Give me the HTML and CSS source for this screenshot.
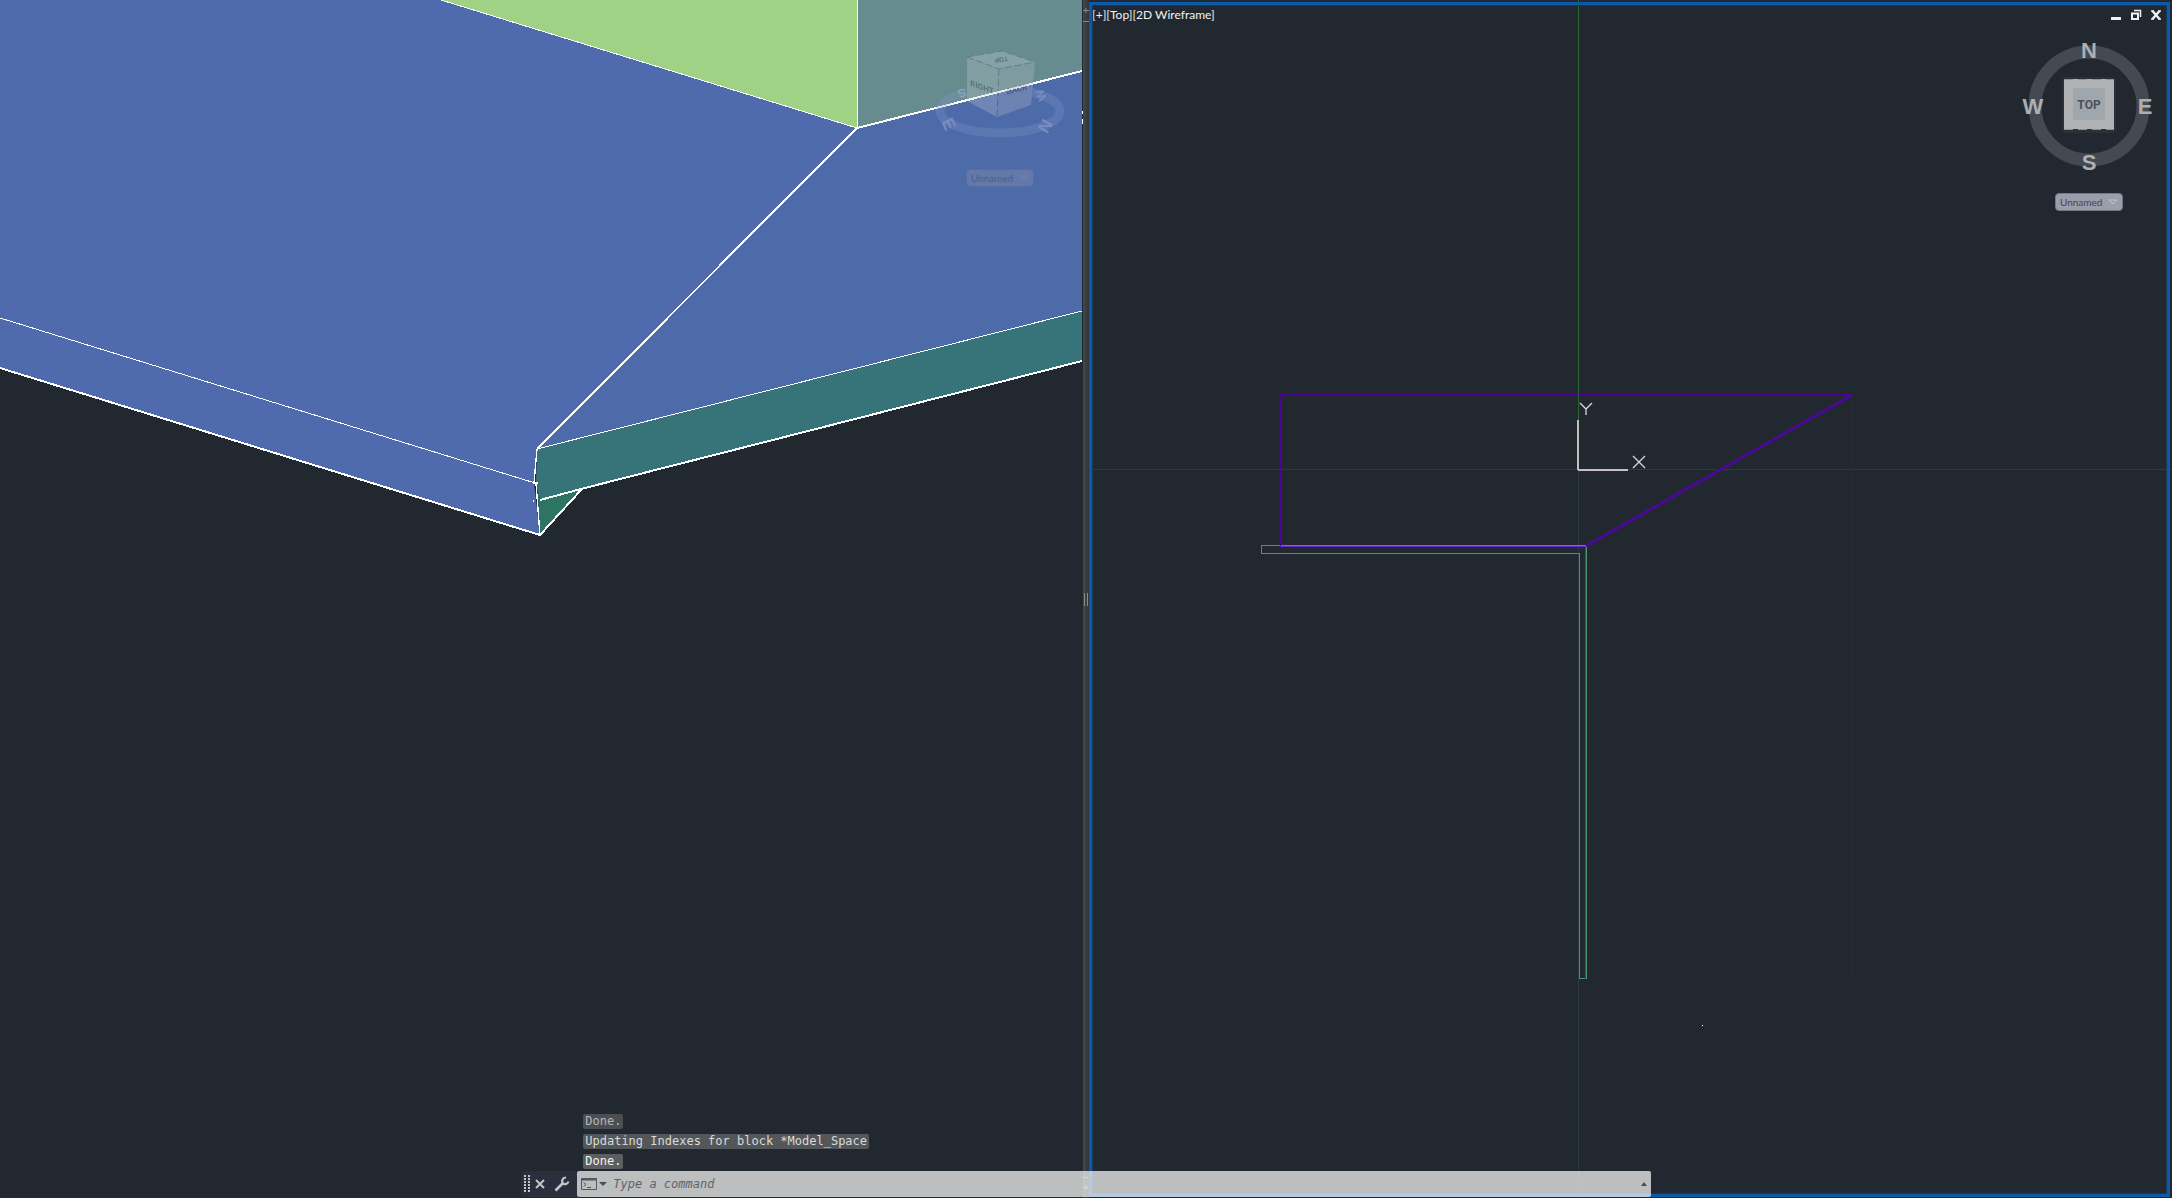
FILE: index.html
```
<!DOCTYPE html>
<html lang="en">
<head>
    <meta charset="UTF-8">
    <meta name="viewport" content="width=device-width, initial-scale=1.0">
    <title>Model Space</title>
    <link rel="stylesheet" href="styles.css">
</head>
<body>
    <main class="workspace">
        <section class="viewport" aria-label="3D view">
            <svg class="scene" viewBox="0 0 1083 1198" preserveAspectRatio="xMidYMid slice">
                <!-- faces -->
                <polygon fill="#506bad" points="0,0 441,0 857,128 537,449 534,483 540,535 0,368"/>
                <polygon fill="#4d6aa9" points="857,128 1082,71 1082,311 537,449"/>
                <polygon fill="#9fd285" points="441,0 857,0 857,128"/>
                <polygon fill="#668c90" points="857,0 1082,0 1082,71 857,128"/>
                <polygon fill="#37747a" points="537,449 1082,311 1082,361 581,489 540,500 536,483"/>
                <polygon fill="#2e7464" points="537,483 540,500 581,490 540,535"/>
                <!-- edges -->
                <g fill="none" stroke="#fff" shape-rendering="crispEdges">
                    <path d="M441 0 857 128V0M0 318 535 483M537 449 1082 311"/>
                    <path d="M537 449 534 483H538M536 483 540 535" stroke-width="1.4"/>
                    <path d="M1082 71 857 128 537 449M0 368 540 535 581 490M540 500 581 489 1082 361" stroke-width="2"/>
                    <path d="M533 500V502M1082 111V114M1082 119V124"/>
                </g>
            </svg>

            <div class="navigator navigator-faded">
                <svg class="cube-3d" viewBox="930 45 140 100">
                    <ellipse class="ring-3d" cx="1000" cy="111" rx="60" ry="22"/>
                    <g class="compass-3d">
                        <text class="far" x="962" y="97" transform="rotate(165 962 93)">S</text>
                        <text class="far" x="1041" y="99" transform="rotate(-115 1041 95)">W</text>
                        <text x="949" y="130" transform="rotate(65 949 124)">E</text>
                        <text x="1045" y="132" transform="rotate(-60 1045 126)">N</text>
                    </g>
                    <polygon fill="#d0d8dc" points="967,57 1002,51 1035,62 999,69"/>
                    <polygon fill="#c2c9d0" points="967,57 999,69 997,117 967,101"/>
                    <polygon fill="#b6bec8" points="999,69 1035,62 1031,105 997,117"/>
                    <path class="cube-edges" d="M967 57 999 69 1035 62M999 69 997 117M967 57 1002 51 1035 62"/>
                    <g class="face-text">
                        <text transform="translate(982 90) skewY(20)">RIGHT</text>
                        <text transform="translate(1017 92) skewY(-14)">BACK</text>
                        <text class="face-top" transform="translate(1001 57) rotate(172)">TOP</text>
                    </g>
                </svg>
                <button class="ucs" type="button">Unnamed
                    <svg viewBox="0 0 10 6"><path d="M1 1H9L5 5Z"/></svg>
                </button>
            </div>
        </section>

        <div class="divider">
            <svg viewBox="0 0 6 24"><path d="M3 8V13M0 10.5H6M0 21.5H6"/></svg>
            <span class="grip"></span>
            <svg viewBox="0 0 6 24"><path d="M3 11V16M0 13.5H6M0 3.5H6"/></svg>
        </div>

        <section class="viewport viewport-active" aria-label="Top view">
            <svg class="scene" viewBox="1089 0 1083 1198" preserveAspectRatio="xMidYMid slice">
                <g fill="none" shape-rendering="crispEdges">
                    <!-- grid axes -->
                    <path stroke="#2e3648" d="M1089 469.5H1578M1578.5 470V1198"/>
                    <path stroke="#5c262b" d="M1578 469.5H2172"/>
                    <path stroke="#2a6c30" d="M1578.5 0V470"/>
                    <!-- fascia -->
                    <path stroke="#4b926f" d="M1586.5 545.5H1261.5V553.5H1579.5V978.5H1586.5V545"/>
                    <!-- roof outline -->
                    <path stroke="#4a0496" d="M1280.5 546V394.5H1851.5V979.5H1586"/>
                    <path stroke="#6a24cc" d="M1280 546.5H1586M1585.5 546V979"/>
                </g>
                <path fill="none" stroke="#4a0896" stroke-width="3" d="M1586 546 1852 395"/>
                <!-- UCS icon -->
                <g fill="none" stroke="#d8dcd8">
                    <path stroke-width="2" stroke="#b9c3b9" d="M1578 420V470"/>
                    <path stroke-width="2" stroke="#c9bfc1" d="M1578 470H1628"/>
                    <path stroke-width="1.3" d="M1580 403 1586 409 1592 403M1586 409V415M1633 456 1645 468M1645 456 1633 468"/>
                </g>
                <path fill="#fff" d="M1702 1025h1v1h-1z"/>
            </svg>

            <header class="viewport-bar">
                <div class="viewport-menu">
                    <button type="button">[+]</button><button type="button">[Top]</button><button type="button">[2D Wireframe]</button>
                </div>
                <div class="window-buttons">
                    <button type="button" aria-label="Minimize"><svg viewBox="0 0 12 12"><path d="M1 9.500H11" stroke-width="3"/></svg></button>
                    <button type="button" aria-label="Restore"><svg viewBox="0 0 12 12"><path d="M2 4.500H8V10H2Z" stroke-width="2"/><path d="M4 1.500H10.500V8" stroke-width="1.500"/></svg></button>
                    <button type="button" aria-label="Close"><svg viewBox="0 0 12 12"><path d="M2.500 2 9.500 10M9.500 2 2.500 10" stroke-width="2.400"/><path d="M1 2H4M8 2H11M1 10H4M8 10H11" stroke-width="1.500"/></svg></button>
                </div>
            </header>

            <div class="navigator navigator-top">
                <svg class="cube-top" viewBox="0 0 140 140">
                    <circle cx="70" cy="72" r="54" fill="none" stroke="#444a51" stroke-width="13"/>
                    <g class="compass">
                        <text x="70" y="24">N</text>
                        <text x="126" y="80">E</text>
                        <text x="70" y="136">S</text>
                        <text x="14" y="80">W</text>
                    </g>
                    <rect x="43" y="43" width="54" height="56" rx="4" fill="#2b3037"/>
                    <rect x="45" y="45" width="50" height="50" fill="#afb1b3"/>
                    <rect x="54" y="54" width="32" height="32" fill="#9fa6ac"/>
                    <path d="M45 45.500H95M45 95.500H95" stroke="#8d9194" stroke-dasharray="9 5"/>
                    <text class="cube-label" x="70" y="75">TOP</text>
                </svg>
                <button class="ucs" type="button">Unnamed
                    <svg viewBox="0 0 10 6"><path d="M1 1H9L5 5Z"/></svg>
                </button>
            </div>
        </section>
    </main>

    <div class="command-window">
        <ul class="history">
            <li class="oldest">Done.</li>
            <li class="older">Updating Indexes for block *Model_Space</li>
            <li>Done.</li>
        </ul>
        <form class="command-line">
            <div class="command-tools">
                <svg class="handle" viewBox="0 0 6 18"><path d="M1 0V18M5 0V18" stroke-width="2" stroke-dasharray="2 1"/></svg>
                <button type="button" aria-label="Close"><svg viewBox="0 0 12 12"><path d="M2 2 10 10M10 2 2 10" stroke-width="2"/></svg></button>
                <button type="button" aria-label="Customize"><svg class="wrench" viewBox="0 0 16 16"><path d="M1.500 14.500 9 7" stroke-width="2.600"/><path d="M12 1.500C9 1.500 7.500 4 8.500 7 10 9 13.500 8.500 14.500 5.500" stroke-width="2.200"/></svg></button>
            </div>
            <div class="command-box">
                <button type="button" aria-label="Recent commands">
                    <svg class="prompt" viewBox="0 0 26 12"><path d="M.5 .5H15.500V11.500H.5Z"/><path d="M0 1.500H16" stroke-width="2"/><path d="M2.500 4.500 5 6.500 2.500 8.500M6 9.500H10"/><path class="solid" d="M18 4H26L22 8Z"/></svg>
                </button>
                <input type="text" aria-label="Command" placeholder="Type a command">
                <button type="button" aria-label="Expand history"><svg class="expand" viewBox="0 0 6 4"><path class="solid" d="M0 4 3 0 6 4Z"/></svg></button>
            </div>
        </form>
    </div>
</body>
</html>
```
FILE: styles.css
```
* {
    box-sizing: border-box;
}
body {
    margin: 0;
    height: 100vh;
    overflow: hidden;
    position: relative;
    background: #222830;
    color: #f0f2f4;
    font-family: Lato, "Noto Sans", sans-serif;
    font-size: 12px;
}
button {
    padding: 0;
    border: 0;
    background: none;
    color: inherit;
    font: inherit;
    cursor: pointer;
}
svg {
    display: block;
}

/* viewports */
.workspace {
    display: grid;
    grid-template-columns: 1fr 6px 1fr;
    height: 100%;
}
.viewport {
    position: relative;
    min-width: 0;
    overflow: hidden;
}
.viewport-active::after {
    content: "";
    position: absolute;
    inset: 2px 2px 1px 0;
    border: 3px solid #0d59a9;
    box-shadow: inset 0 0 1px 1px #173a60;
    pointer-events: none;
}
.scene {
    position: absolute;
    width: 100%;
    height: 100%;
}
.divider {
    display: flex;
    flex-direction: column;
    justify-content: space-between;
    align-items: center;
    background: linear-gradient(to right, #444848, #303438);
}
.divider svg {
    width: 6px;
    height: 24px;
    fill: none;
    stroke: #85898a;
}
.grip {
    width: 4px;
    height: 13px;
    border: solid #8a8a8a;
    border-width: 0 1px;
}
.viewport-bar {
    position: relative;
    display: flex;
    justify-content: space-between;
    padding: 7px 10px 0 3px;
    line-height: 16px;
}
.viewport-menu {
    display: flex;
}
.window-buttons {
    display: flex;
    align-items: center;
    gap: 8px;
}
.window-buttons svg {
    width: 12px;
    height: 12px;
    fill: none;
    stroke: #f2f2f2;
}

/* view cube */
.navigator {
    position: absolute;
    top: 45px;
    right: 13px;
    display: flex;
    flex-direction: column;
    align-items: center;
    gap: 24px;
}
.navigator-top {
    top: 34px;
    gap: 19px;
}
.navigator-faded {
    opacity: 0.3;
}
.cube-3d {
    width: 140px;
    height: 100px;
}
.cube-top {
    width: 140px;
    height: 140px;
}
.ring-3d {
    fill: none;
    stroke: #7f98c8;
    stroke-width: 9;
}
.compass-3d {
    fill: #dde2ee;
    font: bold 17px "Liberation Sans", sans-serif;
    text-anchor: middle;
}
.compass-3d .far {
    font-size: 12px;
}
.cube-edges {
    fill: none;
    stroke: #56646c;
    stroke-dasharray: 7 3;
}
.face-text {
    fill: #35444f;
    font: bold 8px Roboto, sans-serif;
    text-anchor: middle;
}
.face-text .face-top {
    font-size: 7px;
}
.compass {
    fill: #adafb1;
    font: bold 22px "Liberation Sans", sans-serif;
    text-anchor: middle;
}
.cube-label {
    fill: #4a525a;
    font: bold 12px Roboto, sans-serif;
    text-anchor: middle;
}
.ucs {
    display: flex;
    align-items: center;
    justify-content: space-between;
    width: 68px;
    height: 18px;
    padding: 0 4px;
    border: 1px solid #747985;
    border-radius: 4px;
    background: #9a9dac;
    color: #42464f;
    font-size: 10px;
}
.ucs svg {
    width: 10px;
    height: 6px;
    fill: none;
    stroke: #c0c3cc;
}

/* command window */
.command-window {
    position: absolute;
    left: 24%;
    bottom: 1px;
    width: 52%;
    font-family: "DejaVu Sans Mono", monospace;
}
.history {
    display: flex;
    flex-direction: column;
    align-items: flex-start;
    gap: 5px;
    margin: 0 0 2px;
    padding: 0 0 0 62px;
    list-style: none;
}
.history li {
    padding: 0 2px;
    border-radius: 2px;
    background: #5c5e5f;
    color: #f4f4f4;
    line-height: 15px;
}
.history .older {
    background: #545759;
    color: #d9dadb;
}
.history .oldest {
    background: #4c4f52;
    color: #b4b6b8;
}
.command-line {
    display: flex;
    height: 26px;
}
.command-tools {
    display: flex;
    align-items: center;
    gap: 4px;
    width: 56px;
    padding-left: 3px;
    border-radius: 3px 0 0 3px;
    background: #292f3c;
}
.command-tools svg {
    width: 12px;
    height: 12px;
    fill: none;
    stroke: #c4c6c8;
}
.command-tools .handle {
    width: 6px;
    height: 18px;
}
.command-tools .wrench {
    width: 16px;
    height: 16px;
    margin-left: 4px;
}
.command-box {
    display: flex;
    align-items: center;
    flex: 1;
    padding: 0 4px;
    border-radius: 2px;
    background: rgba(243, 243, 243, 0.74);
}
.command-box svg {
    fill: none;
    stroke: #55585a;
}
.command-box .prompt {
    width: 26px;
    height: 12px;
}
.command-box .expand {
    width: 6px;
    height: 4px;
}
.command-box .solid {
    fill: #4a4d4f;
    stroke: none;
}
.command-box input {
    flex: 1;
    min-width: 0;
    padding: 0 6px;
    border: 0;
    outline: 0;
    background: none;
    color: #333;
    font: 12px "DejaVu Sans Mono", monospace;
}
.command-box input::placeholder {
    color: #606366;
    font-style: italic;
    opacity: 1;
}
```
